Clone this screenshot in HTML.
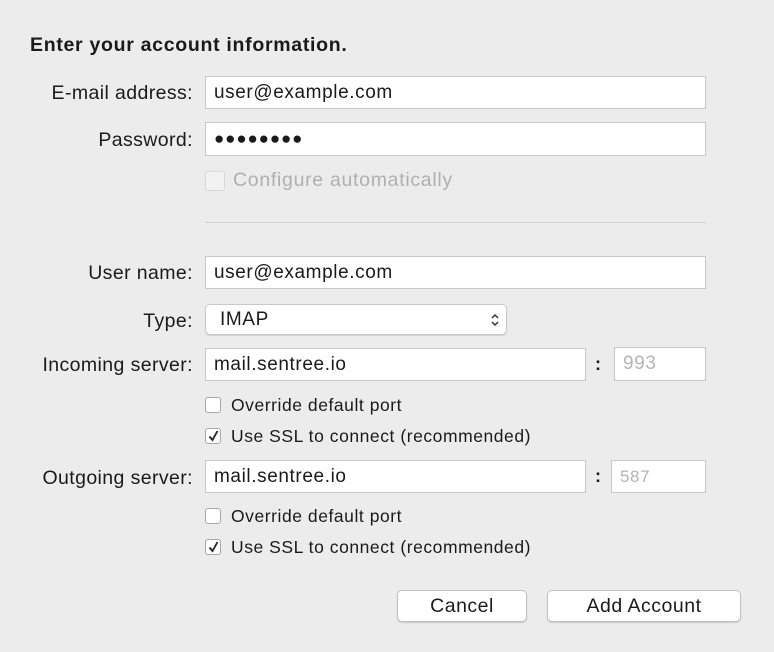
<!DOCTYPE html>
<html><head><style>
body{margin:0;width:774px;height:652px;background:#ececec;font-family:"Liberation Sans",sans-serif;position:relative;overflow:hidden;color:#1a1a1a}
div,span{position:absolute;box-sizing:border-box}
.lbl{right:581px;font-size:19.5px;letter-spacing:0.4px;text-align:right;white-space:nowrap}
.f{background:#fff;border:1px solid #c8c8c8;font-size:19px;letter-spacing:0.6px;padding-left:8px;line-height:31px;white-space:nowrap}
.cb{width:16px;height:16px;border:1px solid #a8a8a8;border-radius:3px;background:#fff}
.ct{font-size:17.5px;letter-spacing:0.55px;white-space:nowrap}
.btn{background:#fff;border:1px solid #c0c0c0;border-radius:5px;box-shadow:0 1px 1px rgba(0,0,0,.15);font-size:19.5px;letter-spacing:0.5px;text-align:center;line-height:30px}
</style></head><body>
<div style="left:30px;top:34px;font-size:19.5px;letter-spacing:0.7px;font-weight:bold;white-space:nowrap">Enter your account information.</div>
<div class="lbl" style="top:82px">E-mail address:</div>
<div class="f" style="left:205px;top:76px;width:501px;height:33px">user@example.com</div>
<div class="lbl" style="top:129px">Password:</div>
<div class="f" style="left:205px;top:122px;width:501px;height:34px;font-size:17px;letter-spacing:0.9px;line-height:32px">●●●●●●●●</div>
<div class="cb" style="left:205px;top:171px;width:20px;height:20px;border-color:#d8d8d8;background:#f2f2f2"></div>
<div class="ct" style="left:233px;top:169px;font-size:19.5px;letter-spacing:0.7px;color:#b0b0b0">Configure automatically</div>
<div style="left:205px;top:222px;width:501px;height:1px;background:#d0d0d0"></div>
<div class="lbl" style="top:262px">User name:</div>
<div class="f" style="left:205px;top:256px;width:501px;height:33px">user@example.com</div>
<div class="lbl" style="top:310px">Type:</div>
<div class="f" style="left:205px;top:304px;width:302px;height:31px;border-radius:5px;padding-left:14px;line-height:29px;box-shadow:0 1px 1px rgba(0,0,0,.12)">IMAP<svg style="position:absolute;right:6px;top:7px" width="10" height="16" viewBox="0 0 10 16"><path d="M2 6l3-3 3 3M2 10l3 3 3-3" fill="none" stroke="#333" stroke-width="1.5"/></svg></div>
<div class="lbl" style="top:354px">Incoming server:</div>
<div class="f" style="left:205px;top:348px;width:381px;height:33px">mail.sentree.io</div>
<div style="left:595px;top:354px;font-size:18px;font-weight:bold">:</div>
<div class="f" style="left:614px;top:347px;width:92px;height:34px;color:#b4b4b4">993</div>
<div class="cb" style="left:205px;top:397px"></div>
<div class="ct" style="left:231px;top:395px">Override default port</div>
<div class="cb" style="left:205px;top:428px"><svg style="position:absolute;left:2px;top:1px" width="11" height="12"><path d="M1.5 6.5l3 3.5 5-9" fill="none" stroke="#222" stroke-width="1.8"/></svg></div>
<div class="ct" style="left:231px;top:426px">Use SSL to connect (recommended)</div>
<div class="lbl" style="top:467px">Outgoing server:</div>
<div class="f" style="left:205px;top:460px;width:381px;height:33px">mail.sentree.io</div>
<div style="left:595px;top:466px;font-size:18px;font-weight:bold">:</div>
<div class="f" style="left:611px;top:460px;width:95px;height:33px;color:#b4b4b4;font-size:17px">587</div>
<div class="cb" style="left:205px;top:508px"></div>
<div class="ct" style="left:231px;top:506px">Override default port</div>
<div class="cb" style="left:205px;top:539px"><svg style="position:absolute;left:2px;top:1px" width="11" height="12"><path d="M1.5 6.5l3 3.5 5-9" fill="none" stroke="#222" stroke-width="1.8"/></svg></div>
<div class="ct" style="left:231px;top:537px">Use SSL to connect (recommended)</div>
<div class="btn" style="left:397px;top:590px;width:130px;height:32px">Cancel</div>
<div class="btn" style="left:547px;top:590px;width:194px;height:32px">Add Account</div>
</body></html>
